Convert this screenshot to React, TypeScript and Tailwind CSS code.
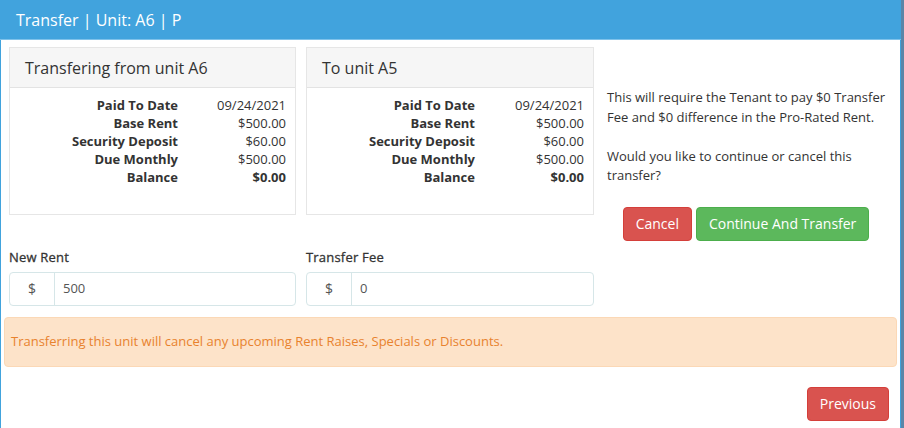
import React from "react";

const font = { fontFamily: '"Open Sans", "Noto Sans", sans-serif' };

const rows: [string, string, boolean][] = [
  ["Paid To Date", "09/24/2021", false],
  ["Base Rent", "$500.00", false],
  ["Security Deposit", "$60.00", false],
  ["Due Monthly", "$500.00", false],
  ["Balance", "$0.00", true],
];

function UnitPanel({ title, w }: { title: string; w: string }) {
  return (
    <div className={`${w} h-[168px] shrink-0 border border-[#e6e6e6] bg-white`}>
      <div className="h-[40px] bg-[#f6f6f6] border-b border-[#e3e3e3] px-[15px] flex items-center text-[16px] text-[#333]">
        {title}
      </div>
      <div className="px-[9px] pt-[8px] grid grid-cols-[159px_1fr] text-[13px] leading-[18px] text-[#333]">
        {rows.map(([l, v, b]) => (
          <React.Fragment key={l}>
            <div className="text-right font-bold">{l}</div>
            <div className={`text-right ${b ? "font-bold" : ""}`}>{v}</div>
          </React.Fragment>
        ))}
      </div>
    </div>
  );
}

function MoneyInput({ label, value, w }: { label: string; value: string; w: string }) {
  return (
    <div className={`${w} shrink-0`}>
      <div className="text-[13px] font-medium text-[#333] leading-[18px] mb-[6px] tracking-[0.2px] [-webkit-text-stroke:0.3px_#333]">
        {label}
      </div>
      <div className="h-[34px] flex border border-[#d6e6e8] rounded-[4px] text-[13px] text-[#555]">
        <div className="w-[45px] flex items-center justify-center border-r border-[#d6e6e8] text-[14px]">$</div>
        <div className="flex items-center pl-[8px]">{value}</div>
      </div>
    </div>
  );
}

export default function App() {
  return (
    <div className="w-[904px] h-[428px] flex overflow-hidden bg-white" style={font}>
      <div className="w-[901px] h-full flex flex-col">
        <div className="h-[40px] shrink-0 bg-[#41a3dd] border-b border-[#7fc2ea] flex items-center pl-[16px] text-white text-[16px]">
          Transfer | Unit: A6 | P
        </div>
        <div className="flex-1 border-l border-r border-[#41a3dd] bg-white flex flex-col">
          <div className="flex items-start pl-[8px] pt-[7px]">
            <UnitPanel title="Transfering from unit A6" w="w-[287px]" />
            <div className="w-[10px] shrink-0" />
            <UnitPanel title="To unit A5" w="w-[288px]" />
            <div className="w-[13px] shrink-0" />
            <div className="w-[278px] shrink-0 pt-[41px] text-[13px] leading-[19.5px] text-[#333]">
              <p>This will require the Tenant to pay $0 Transfer Fee and $0 difference in the Pro-Rated Rent.</p>
              <p className="mt-[19.5px]">Would you like to continue or cancel this transfer?</p>
              <div className="flex justify-center gap-[4px] mt-[21px]">
                <button className="h-[34px] px-[12px] rounded-[4px] bg-[#d9534f] border border-[#d43f3a] text-white text-[14px]">
                  Cancel
                </button>
                <button className="h-[34px] px-[12px] rounded-[4px] bg-[#5cb85c] border border-[#4cae4c] text-white text-[14px]">
                  Continue And Transfer
                </button>
              </div>
            </div>
          </div>
          <div className="flex pl-[8px] mt-[7px]">
            <MoneyInput label="New Rent" value="500" w="w-[287px]" />
            <div className="w-[10px] shrink-0" />
            <MoneyInput label="Transfer Fee" value="0" w="w-[288px]" />
          </div>
          <div className="mx-[3px] mt-[11px] h-[50px] shrink-0 bg-[#fde3c9] border border-[#fbd8b6] rounded-[4px] flex items-center px-[6px] text-[13px] text-[#e8822e]">
            Transferring this unit will cancel any upcoming Rent Raises, Specials or Discounts.
          </div>
          <div className="flex justify-end pr-[11px] mt-[20px]">
            <button className="h-[34px] px-[12px] rounded-[4px] bg-[#d9534f] border border-[#d43f3a] text-white text-[14px]">
              Previous
            </button>
          </div>
        </div>
      </div>
      <div className="w-[3px] h-full bg-[#5b86a8]" />
    </div>
  );
}
